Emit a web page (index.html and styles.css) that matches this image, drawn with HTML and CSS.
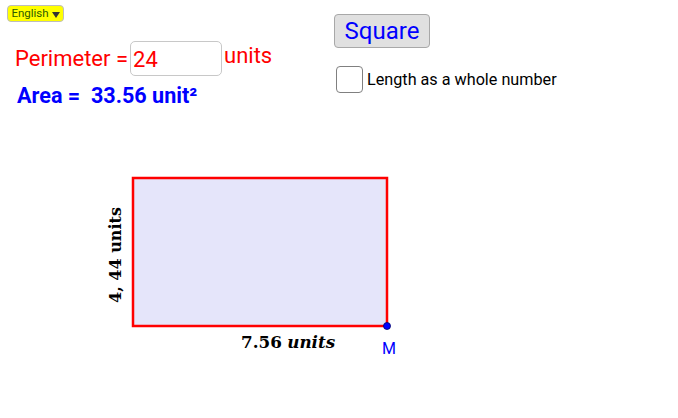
FILE: index.html
```html
<!DOCTYPE html>
<html>
<head>
<meta charset="utf-8">
<link rel="stylesheet" href="styles.css">
</head>
<body>
<div class="applet">
  <div class="lang">English <span class="tri"></span></div>

  <div class="perim">
    <span class="plabel">Perimeter =</span><span class="pinput">24</span><span class="punits">units</span>
  </div>
  <div class="area">Area =&nbsp; 33.56 unit²</div>

  <div class="square-btn">Square</div>
  <label class="check"><span class="box"></span><span class="clabel">Length as a whole number</span></label>

  <svg class="geo" width="678" height="418" viewBox="0 0 678 418">
    <rect x="133" y="178" width="254" height="148" fill="#e5e5fa" stroke="#ff0000" stroke-width="2.5"/>
    <circle cx="387" cy="326" r="3.5" fill="#0000ff" stroke="#000066" stroke-width="0.8"/>
  </svg>
  <div class="wlabel"><b>7.56</b> <i>units</i></div>
  <div class="hlabel"><b>4, 44 units</b></div>
  <div class="mlabel">M</div>
</div>
</body>
</html>
```

FILE: styles.css
```css
html, body {
  margin: 0;
  padding: 0;
  background: #ffffff;
}
.applet {
  position: relative;
  width: 678px;
  height: 418px;
  overflow: hidden;
  font-family: Roboto, "Liberation Sans", sans-serif;
}
.lang {
  position: absolute;
  left: 7px;
  top: 5px;
  width: 55px;
  height: 15px;
  box-sizing: content-box;
  background: #ffff00;
  border: 1px solid #bdbdbd;
  border-radius: 4px;
  font-size: 11.5px;
  line-height: 15px;
  color: #2d5a00;
  display: flex;
  align-items: center;
  justify-content: center;
  gap: 3px;
}
.tri {
  width: 0;
  height: 0;
  border-left: 4px solid transparent;
  border-right: 4px solid transparent;
  border-top: 6px solid #333;
  margin-top: 2px;
}
.perim {
  position: absolute;
  left: 15px;
  top: 41px;
  display: flex;
  align-items: center;
  color: #ff0000;
  font-size: 22px;
}
.plabel {
  line-height: 34px;
}
.pinput {
  box-sizing: border-box;
  width: 92px;
  height: 35px;
  border: 1px solid #c8c8c8;
  border-radius: 5px;
  margin-left: 2px;
  padding-left: 2px;
  line-height: 35px;
  font-size: 22px;
}
.punits {
  margin-left: 2px;
  align-self: flex-start;
  line-height: 30px;
  font-size: 22px;
}
.area {
  position: absolute;
  left: 17px;
  top: 83px;
  font-size: 21.6px;
  font-weight: bold;
  color: #0000ff;
  white-space: pre;
}
.square-btn {
  position: absolute;
  left: 334px;
  top: 14px;
  width: 96px;
  height: 34px;
  box-sizing: border-box;
  background: #e0e0e0;
  border: 1px solid #a8a8a8;
  border-radius: 4px;
  color: #0000ff;
  font-size: 24px;
  text-align: center;
  line-height: 32px;
}
.check {
  position: absolute;
  left: 336px;
  top: 66px;
  display: flex;
  align-items: center;
  gap: 4px;
}
.box {
  width: 27px;
  height: 27px;
  box-sizing: border-box;
  border: 1.5px solid #808080;
  border-radius: 4px;
  background: #fff;
}
.clabel {
  font-size: 16.2px;
  color: #000;
}
.geo {
  position: absolute;
  left: 0;
  top: 0;
}
.wlabel {
  position: absolute;
  left: 241px;
  top: 332px;
  font-family: "DejaVu Serif", "Liberation Serif", serif;
  font-size: 16.8px;
  color: #000;
}
.wlabel i {
  font-weight: bold;
}
.hlabel {
  position: absolute;
  left: 68px;
  top: 246px;
  width: 96px;
  text-align: center;
  transform: rotate(-90deg);
  font-family: "DejaVu Serif", "Liberation Serif", serif;
  font-size: 16px;
  line-height: 18px;
  color: #000;
}
.mlabel {
  position: absolute;
  left: 382px;
  top: 339px;
  color: #0000ff;
  font-size: 16px;
}
```
